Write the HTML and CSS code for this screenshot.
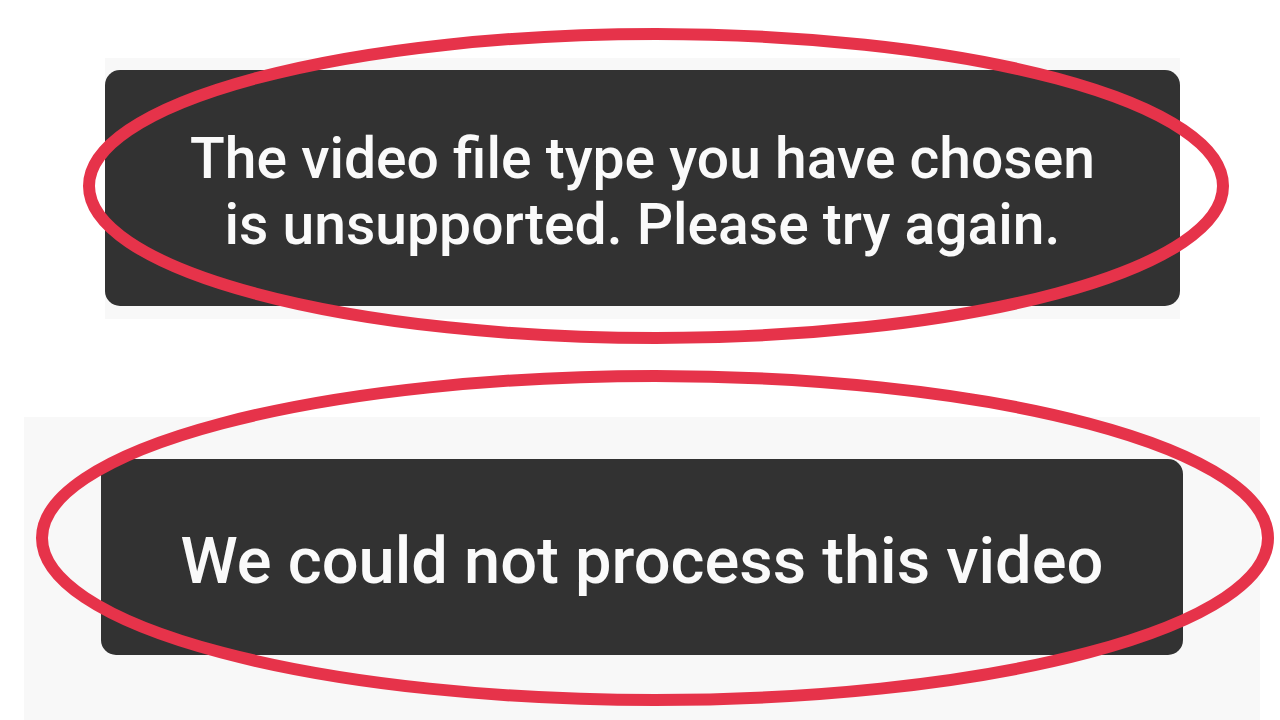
FILE: index.html
```html
<!DOCTYPE html>
<html lang="en">
<head>
    <meta charset="UTF-8">
    <title>Video errors</title>
    <link rel="stylesheet" href="styles.css">
</head>
<body>
    <!-- First error toast -->
    <div class="panel panel-top">
        <div class="toast toast-top">
            <p>The video file type you have chosen<br>is unsupported. Please try again.</p>
        </div>
    </div>

    <!-- Second error toast -->
    <div class="panel panel-bottom">
        <div class="toast toast-bottom">
            <p>We could not process this video</p>
        </div>
    </div>

    <!-- Red marker circles drawn over the screenshot -->
    <svg class="marks" width="1280" height="720" viewBox="0 0 1280 720">
        <ellipse cx="656" cy="186" rx="567" ry="152" />
        <ellipse cx="655" cy="538" rx="613" ry="162" />
    </svg>
</body>
</html>
```

FILE: styles.css
```css
body {
    margin: 0;
    width: 1280px;
    height: 720px;
    background: #ffffff;
    font-family: Roboto, "Liberation Sans", sans-serif;
    position: relative;
    overflow: hidden;
}

/* Light grey strip behind each toast */
.panel {
    background: #f8f8f8;
}

.panel-top {
    margin: 58px 0 0 105px;
    width: 1075px;
    padding: 12px 0 13px;
}

.panel-bottom {
    margin: 98px 0 0 24px;
    width: 1236px;
    height: 303px;
    padding-top: 42px;
    box-sizing: border-box;
}

/* Dark toast */
.toast {
    background: #323232;
    border-radius: 15px;
    color: #fafafa;
    display: flex;
    align-items: center;
    justify-content: center;
    text-align: center;
}

.toast p {
    margin: 0;
    font-weight: 500;
}

.toast-top {
    height: 236px;
}

.toast-top p {
    font-size: 57px;
    line-height: 66px;
    padding-top: 8px;
}

.toast-bottom {
    margin-left: 77px;
    width: 1082px;
    height: 196px;
}

.toast-bottom p {
    font-size: 65px;
    line-height: 76px;
    padding-top: 8px;
}

/* Annotation layer */
.marks {
    position: absolute;
    top: 0;
    left: 0;
    pointer-events: none;
}

.marks ellipse {
    fill: none;
    stroke: #e6334a;
    stroke-width: 12;
}
```
